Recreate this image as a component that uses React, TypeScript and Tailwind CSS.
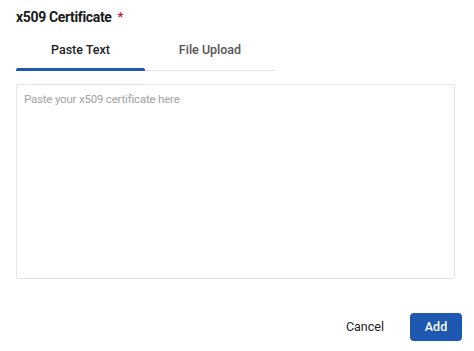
import { useState } from "react";

export default function App() {
  const [tab, setTab] = useState<"paste" | "file">("paste");

  return (
    <div className="w-[474px] h-[351px] bg-white font-['Roboto',sans-serif] text-[#1a1a1a]">
      <div className="px-4 pt-[7px]">
        <div className="flex items-center gap-[6px] h-[20px]">
          <span className="text-[14px] font-bold tracking-[-0.35px]">x509 Certificate</span>
          <span className="text-[13px] font-bold text-[#c0272d]">*</span>
        </div>

        {/* Tabs */}
        <div className="mt-[6px] w-[259px] flex border-b border-[#e6e6e6]">
          <button
            onClick={() => setTab("paste")}
            className={`relative w-[129px] h-[37px] pb-[3px] text-[12.5px] font-medium ${
              tab === "paste" ? "text-[#1f1f1f]" : "text-[#555]"
            }`}
          >
            Paste Text
            {tab === "paste" && (
              <span className="absolute left-0 right-0 -bottom-px h-[3px] rounded-t-[2px] bg-[#1f58b0]" />
            )}
          </button>
          <button
            onClick={() => setTab("file")}
            className={`relative w-[130px] h-[37px] pb-[3px] text-[12.5px] font-medium ${
              tab === "file" ? "text-[#1f1f1f]" : "text-[#555]"
            }`}
          >
            File Upload
            {tab === "file" && (
              <span className="absolute left-0 right-0 -bottom-px h-[3px] rounded-t-[2px] bg-[#1f58b0]" />
            )}
          </button>
        </div>

        <textarea
          className="mt-[13px] w-[439px] h-[195px] border border-[#e4e4e4] rounded-[2px] px-[7px] py-[6px] text-[11.5px] tracking-[-0.2px] resize-none outline-none placeholder:text-[#a3a3a3]"
          placeholder="Paste your x509 certificate here"
        />

        <div className="mt-[27px] flex items-center justify-end gap-[26px] w-[446px]">
          <button className="text-[12.5px] text-[#222]">Cancel</button>
          <button className="w-[52px] h-[28px] rounded-[4px] bg-[#1f58b0] text-white text-[12.5px] font-medium">
            Add
          </button>
        </div>
      </div>
    </div>
  );
}
